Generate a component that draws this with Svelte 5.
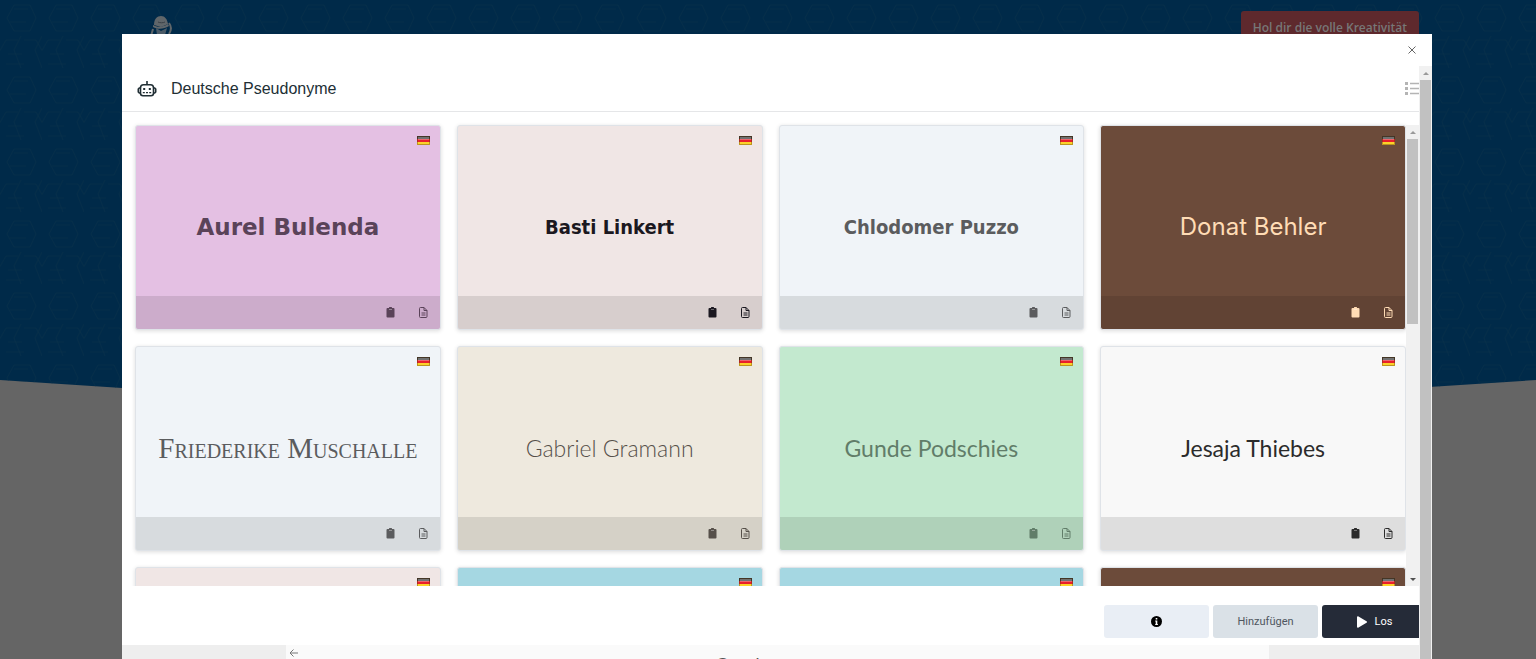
<script>
  const cards = [
    { name: 'Aurel Bulenda', theme: 'orchid', face: 'wide' },
    { name: 'Basti Linkert', theme: 'rose', face: 'narrow' },
    { name: 'Chlodomer Puzzo', theme: 'ice', face: 'narrow' },
    { name: 'Donat Behler', theme: 'cocoa', face: 'round' },
    { name: 'Friederike Muschalle', theme: 'ice', face: 'caps' },
    { name: 'Gabriel Gramann', theme: 'sand', face: 'thin' },
    { name: 'Gunde Podschies', theme: 'mint', face: 'geometric' },
    { name: 'Jesaja Thiebes', theme: 'snow', face: 'geometric' },
    // still loading, only the card is known
    { theme: 'rose' },
    { theme: 'sky' },
    { theme: 'sky' },
    { theme: 'cocoa' },
  ]
</script>

{#snippet flag()}
  <svg class="flag" viewBox="0 0 13 9" role="img" aria-label="Deutsch">
    <path fill="#343434" d="M0 0h13v3H0z" />
    <path fill="#e8202b" d="M0 3h13v3H0z" />
    <path fill="#fbd22a" d="M0 6h13v3H0z" />
    <path fill="#fff" opacity=".3" d="M1 1h11v3H1z" />
    <path fill="none" stroke="#5c3a12" stroke-opacity=".4" d="M.5.5h12v8H.5z" />
  </svg>
{/snippet}

<div class="site">
  <div class="hero">
    <svg class="pattern" aria-hidden="true">
      <defs>
        <pattern id="hex" width="42" height="72" patternUnits="userSpaceOnUse">
          <path
            fill="none"
            stroke="#0a304a"
            stroke-opacity=".6"
            d="M7 18 14 5h16l6 13-6 13H14zM14 9h14M10 22h16M21 36l-7 14 7 18M42 36l-7 14 7 18M-2 54l8-14h12M24 40h12l8 14M8 54h14M6 64h18"
          />
        </pattern>
      </defs>
      <rect width="100%" height="100%" fill="url(#hex)" />
    </svg>
    <header class="topbar">
      <svg class="logo" viewBox="0 0 24 24" aria-hidden="true">
        <path fill="#60666a" d="M5 10c0-6 3-9 7-9s6 3 7 8l-7 3z" />
        <path fill="#60666a" d="M4 10c5 3 10 2 15-1l1 2c-5 3-11 4-16 1z" />
        <path fill="#4b5a66" d="M7 13l5 3 6-3-2 7H8z" />
        <path fill="none" stroke="#60666a" stroke-width="2" d="M20 8c3 4 2 8 0 11M4 14l-2 7" />
        <path fill="none" stroke="#3a4046" d="M9 7c2 1 5 1 7 0" />
      </svg>
      <a class="upgrade" href="#premium">Hol dir die volle Kreativität</a>
    </header>
  </div>
</div>

<div class="overlay">
  <div class="modal" role="dialog" aria-labelledby="title">
    <div class="modal-bar">
      <button class="close" type="button" aria-label="Schließen">
        <svg viewBox="0 0 8 8"><path d="M.5.5l7 7M7.500.5l-7 7" /></svg>
      </button>
    </div>

    <div class="frame">
      <div class="content">
        <div class="heading">
          <svg class="robot" viewBox="0 0 20 18" aria-hidden="true">
            <g fill="none" stroke="currentColor" stroke-width="1.600">
              <path d="M10 1v4M6.500 4.800h7a3 3 0 0 1 3 3v5.400a2.500 2.500 0 0 1-2.500 2.500H6a2.500 2.500 0 0 1-2.500-2.500V7.800a3 3 0 0 1 3-3z" />
              <path d="M3.500 8H2.300L1.300 9v3l1 1h1.200M16.500 8h1.200l1 1v3l-1 1h-1.200" />
            </g>
            <path fill="currentColor" d="M6.200 8h2v2h-2zM11.800 8h2v2h-2zM5.800 12h2v1.300h-2zM9 12h2v1.300H9zM12.200 12h2v1.300h-2z" />
          </svg>
          <h1 id="title">Deutsche Pseudonyme</h1>
          <button class="list-toggle" type="button" aria-label="Listenansicht">
            <svg viewBox="0 0 16 14">
              <path fill="#b4b4b4" d="M0 0h3v3H0zM0 5h3v3H0zM0 10h3v3H0zM5 .8h11v1.500H5zM5 5.800h11v1.500H5zM5 10.800h11v1.500H5z" />
            </svg>
          </button>
        </div>

        <div class="results">
          <div class="grid">
            {#each cards as card}
              <article class="card {card.theme}">
                <div class="card-body">
                  {@render flag()}
                  {#if card.name}
                    <h2 class="name {card.face}">{card.name}</h2>
                  {/if}
                </div>
                <div class="card-actions">
                  <button type="button" aria-label="Kopieren">
                    <svg viewBox="0 0 9 11">
                      <path fill="currentColor" d="M1.500 1H3a1.500 1.500 0 0 1 3 0h1.500a1 1 0 0 1 1 1v7.500a1 1 0 0 1-1 1h-6a1 1 0 0 1-1-1V2a1 1 0 0 1 1-1z" />
                      <path stroke="#fff" stroke-opacity=".35" d="M3 2.500h3" />
                    </svg>
                  </button>
                  <button type="button" aria-label="Details">
                    <svg viewBox="0 0 9 11">
                      <path fill="none" stroke="currentColor" d="M1.500.5H5L8 3.500v6a1 1 0 0 1-1 1H1.500a1 1 0 0 1-1-1v-8a1 1 0 0 1 1-1zM5 .5v3h3M2.500 6h4M2.500 8h4" />
                    </svg>
                  </button>
                </div>
              </article>
            {/each}
          </div>
          <div class="scrollbar" aria-hidden="true">
            <span class="arrow up"></span>
            <span class="thumb short"></span>
            <span class="arrow down"></span>
          </div>
        </div>

        <div class="buttons">
          <button class="btn info" type="button" aria-label="Info">
            <svg viewBox="0 0 11 11">
              <circle cx="5.500" cy="5.500" r="5.500" fill="#000" />
              <path fill="#fff" d="M4.700 2h1.600v1.500H4.700zM4.200 4.500h2.100V8h.6v1H4.200V8h.5V5.500h-.5z" />
            </svg>
          </button>
          <button class="btn add" type="button">Hinzufügen</button>
          <button class="btn go" type="button">
            <svg viewBox="0 0 10 12"><path fill="#fff" d="M0 1.200C0 .3.700 0 1.500.4l8 4.800c.7.400.7 1.200 0 1.600l-8 4.800C.7 12 0 11.700 0 10.800z" /></svg>
            Los
          </button>
        </div>

        <div class="lower">
          <div class="sheet">
            <button class="back" type="button" aria-label="Zurück">
              <svg viewBox="0 0 9 8"><path d="M9 4H1M4.500.5L1 4l3.500 3.500" /></svg>
            </button>
            <p>Gender</p>
          </div>
        </div>
      </div>

      <div class="scrollbar outer" aria-hidden="true">
        <span class="arrow up"></span>
        <span class="thumb"></span>
      </div>
    </div>
  </div>
</div>

<style>
  :global(body) {
    margin: 0;
    overflow: hidden;
    font-family: 'Liberation Sans', Arial, sans-serif;
  }

  button {
    padding: 0;
    border: 0;
    background: none;
    color: inherit;
    font: inherit;
    cursor: pointer;
  }

  svg {
    display: block;
  }

  /* Dimmed page behind the dialog */
  .site {
    height: 100vh;
    background: #656565;
  }

  .hero {
    position: relative;
    height: 430px;
    background: #002a49;
    clip-path: polygon(0 0, 100% 0, 100% 380px, 50% 100%, 0 380px);
  }

  .pattern {
    position: absolute;
    inset: 0;
    width: 100%;
    height: 100%;
  }

  .topbar {
    position: relative;
    display: flex;
    justify-content: space-between;
    align-items: flex-start;
    padding: 11px 117px 0 149px;
  }

  .logo {
    width: 24px;
    height: 24px;
    margin-top: 4px;
  }

  .upgrade {
    padding: 8px 12px;
    border-radius: 3px;
    background: #5e292d;
    color: #777;
    font: 600 12px/17px 'Open Sans', sans-serif;
    text-decoration: none;
  }

  /* Dialog */
  .overlay {
    position: fixed;
    inset: 0;
    display: flex;
    padding: 34px 104px 0 122px;
  }

  .modal {
    display: flex;
    flex: 1;
    flex-direction: column;
    min-width: 0;
    background: #fff;
    overflow: hidden;
  }

  .modal-bar {
    display: flex;
    flex: none;
    justify-content: flex-end;
    align-items: center;
    height: 32px;
    padding-right: 16px;
  }

  .close svg {
    width: 8px;
    height: 8px;
    fill: none;
    stroke: #666;
  }

  .frame {
    display: flex;
    flex: 1;
    min-height: 0;
  }

  .content {
    flex: 1;
    min-width: 0;
    overflow: hidden;
  }

  .heading {
    display: flex;
    align-items: center;
    height: 45px;
    padding-left: 15px;
    border-bottom: 1px solid #e5e6e8;
    color: #212f35;
  }

  .robot {
    width: 20px;
    height: 18px;
    margin-right: 14px;
  }

  h1 {
    flex: 1;
    margin: 0;
    font-size: 16px;
    font-weight: 400;
  }

  .list-toggle {
    margin-right: -2px;
  }

  .list-toggle svg {
    width: 16px;
    height: 14px;
  }

  .results {
    display: flex;
    height: 70vh;
    padding: 13px 0 0 13px;
    overflow: hidden;
  }

  .grid {
    display: grid;
    flex: 1;
    grid-template-columns: repeat(4, 1fr);
    align-content: start;
    gap: 16px;
  }

  .card {
    display: flex;
    flex-direction: column;
    height: 205px;
    box-sizing: border-box;
    border: 1px solid #dfe3e8;
    border-radius: 3px;
    box-shadow: 0 1px 4px rgba(0, 0, 0, 0.14);
    overflow: hidden;
  }

  .card-body {
    position: relative;
    display: flex;
    flex: 1;
    justify-content: center;
    align-items: center;
    padding-top: 32px;
  }

  .flag {
    position: absolute;
    top: 10px;
    right: 10px;
    width: 13px;
    height: 9px;
  }

  .name {
    margin: 0;
    font-size: 23px;
    font-weight: 400;
    line-height: 32px;
    white-space: nowrap;
  }

  .card-actions {
    display: flex;
    justify-content: flex-end;
    align-items: center;
    gap: 24px;
    height: 33px;
    padding-right: 12px;
    background: rgba(0, 0, 0, 0.1);
  }

  .card-actions svg {
    width: 9px;
    height: 11px;
  }

  /* Card colours */
  .orchid { background: #e4c0e3; color: #5a4359; }
  .rose   { background: #f0e6e5; color: #1b1820; }
  .ice    { background: #f0f4f8; color: #5b5c5e; }
  .cocoa  { background: #6c4b3a; color: #ffdcb5; }
  .sand   { background: #eee9de; color: #56504a; }
  .mint   { background: #c3e9cf; color: #617d69; }
  .snow   { background: #f8f8f8; color: #2b2b2b; }
  .sky    { background: #a5d7e2; color: #34525a; }

  /* Name faces */
  .wide      { font-family: 'DejaVu Sans', sans-serif; font-weight: 700; }
  .narrow    { font-family: 'DejaVu Sans Condensed', 'DejaVu Sans', sans-serif; font-size: 20px; font-weight: 700; }
  .round     { font-family: Inter, sans-serif; font-size: 24px; }
  .caps      { font-family: 'Liberation Serif', serif; font-size: 29px; font-variant: small-caps; }
  .thin      { font-family: Lato, sans-serif; font-weight: 300; }
  .geometric { font-family: Lato, sans-serif; }

  /* Scrollbars */
  .scrollbar {
    display: flex;
    flex: none;
    flex-direction: column;
    align-items: center;
    width: 13px;
    background: #f1f1f1;
  }

  .arrow {
    flex: none;
    width: 0;
    border: 3px solid transparent;
  }

  .up {
    margin: 3px 0 5px;
    border-bottom-color: #9a9a9a;
  }

  .down {
    margin: auto 0 2px;
    border-top-color: #505050;
  }

  .thumb {
    flex: 1;
    width: 11px;
    background: #c1c1c1;
  }

  .short {
    flex: 0 0 40%;
  }

  .buttons {
    display: flex;
    justify-content: flex-end;
    gap: 4px;
    margin-right: -8px;
    padding: 19px 0 7px;
  }

  .btn {
    display: flex;
    justify-content: center;
    align-items: center;
    gap: 8px;
    width: 105px;
    height: 33px;
    border-radius: 3px;
    font-family: Roboto, sans-serif;
    font-size: 11px;
  }

  .info { background: #e9eef5; }
  .add  { background: #dae1e7; color: #4f5660; }
  .go   { background: #252b38; color: #fff; }

  .info svg {
    width: 11px;
    height: 11px;
  }

  .go svg {
    width: 10px;
    height: 12px;
  }

  .lower {
    padding: 0 150px 0 164px;
    background: #eee;
  }

  .sheet {
    display: flex;
    align-items: flex-start;
    height: 60px;
    padding: 4px 76px 0 3px;
    background: #fafafa;
    color: #555;
  }

  .back svg {
    width: 9px;
    height: 8px;
    fill: none;
    stroke: #777;
  }

  .sheet p {
    flex: 1;
    margin: 6px 0 0;
    font-size: 18px;
    text-align: center;
  }
</style>
